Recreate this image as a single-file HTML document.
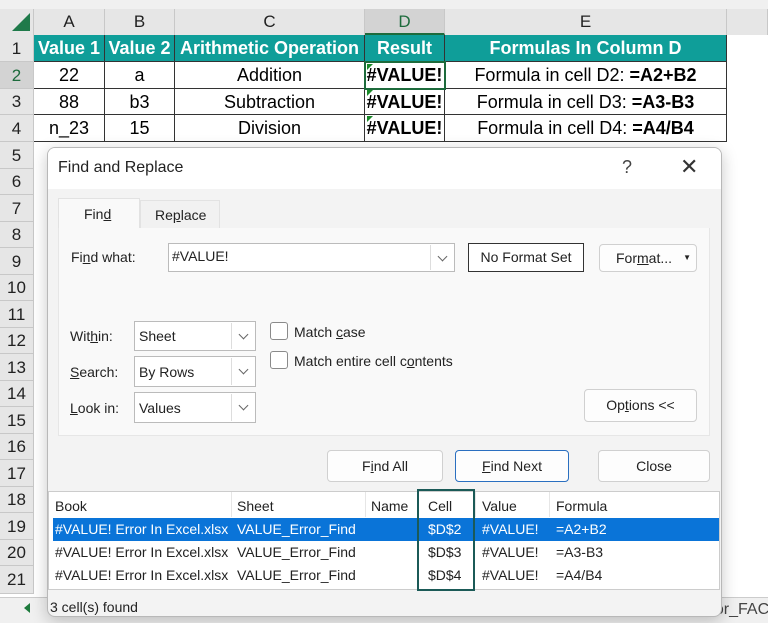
<!DOCTYPE html>
<html><head><meta charset="utf-8"><style>
*{margin:0;padding:0;box-sizing:border-box}
body{width:768px;height:623px;overflow:hidden;background:#fff;font-family:"Liberation Sans",sans-serif;position:relative}
.a{position:absolute}
.rh{position:absolute;left:0;width:34px;background:#e6e6e6;border-bottom:1px solid #c8c8c8;border-right:1px solid #c8c8c8;text-align:center;font-size:17px;color:#222}
.ch{position:absolute;top:9px;height:26px;background:#e6e6e6;border-right:1px solid #c8c8c8;text-align:center;font-size:17px;line-height:26px;color:#222}
.c{position:absolute;text-align:center;font-size:18px;border-right:1px solid #333;border-bottom:1px solid #333;white-space:nowrap;overflow:hidden}
.h{background:#0f9e99;color:#fff;font-weight:bold}
.t{font-size:14px;color:#222;position:absolute;white-space:nowrap}
.btn{position:absolute;background:#fdfdfd;border:1px solid #d0d0d0;border-radius:4px;font-size:14px;text-align:center;color:#222}
.cb{position:absolute;background:#fff;border:1px solid #8a8a8a}
.dd{position:absolute;right:1px;top:1px;bottom:1px;width:23px;border-left:1px solid #ddd;background:#fff}
.dd:after{content:"";position:absolute;left:8px;top:8px;width:6px;height:6px;border-right:1px solid #666;border-bottom:1px solid #666;transform:rotate(45deg)}
u{text-decoration:underline}
</style></head><body>
<div class="a" style="left:0;top:0;width:768px;height:9px;background:#f0f0f0"></div>
<div class="a" style="left:0;top:9px;width:34px;height:26px;background:#e6e6e6;border-right:1px solid #c8c8c8"></div>
<div class="a" style="left:12px;top:13px;width:0;height:0;border-left:18px solid transparent;border-bottom:18px solid #1f7a4a"></div>
<div class="ch" style="left:34px;width:71px">A</div>
<div class="ch" style="left:105px;width:70px">B</div>
<div class="ch" style="left:175px;width:190px">C</div>
<div class="ch" style="left:365px;width:80px;background:#d3d3d3;color:#1d6b3c;border-bottom:2px solid #1d6b3c">D</div>
<div class="ch" style="left:445px;width:282px">E</div>
<div class="ch" style="left:727px;width:41px"></div>
<div class="rh" style="top:35px;height:27px;line-height:27px">1</div>
<div class="rh" style="top:62px;height:27px;line-height:27px;background:#d3d3d3;color:#1d6b3c">2</div>
<div class="rh" style="top:89px;height:26px;line-height:26px">3</div>
<div class="rh" style="top:115px;height:27px;line-height:27px">4</div>
<div class="rh" style="top:142px;height:27px;line-height:27px">5</div>
<div class="rh" style="top:169px;height:26px;line-height:26px">6</div>
<div class="rh" style="top:195px;height:27px;line-height:27px">7</div>
<div class="rh" style="top:222px;height:26px;line-height:26px">8</div>
<div class="rh" style="top:248px;height:27px;line-height:27px">9</div>
<div class="rh" style="top:275px;height:26px;line-height:26px">10</div>
<div class="rh" style="top:301px;height:27px;line-height:27px">11</div>
<div class="rh" style="top:328px;height:26px;line-height:26px">12</div>
<div class="rh" style="top:354px;height:27px;line-height:27px">13</div>
<div class="rh" style="top:381px;height:26px;line-height:26px">14</div>
<div class="rh" style="top:407px;height:27px;line-height:27px">15</div>
<div class="rh" style="top:434px;height:26px;line-height:26px">16</div>
<div class="rh" style="top:460px;height:27px;line-height:27px">17</div>
<div class="rh" style="top:487px;height:26px;line-height:26px">18</div>
<div class="rh" style="top:513px;height:27px;line-height:27px">19</div>
<div class="rh" style="top:540px;height:26px;line-height:26px">20</div>
<div class="rh" style="top:566px;height:28px;line-height:28px">21</div>
<div class="c h" style="left:34px;top:35px;width:71px;height:27px;line-height:27px">Value 1</div>
<div class="c h" style="left:105px;top:35px;width:70px;height:27px;line-height:27px">Value 2</div>
<div class="c h" style="left:175px;top:35px;width:190px;height:27px;line-height:27px">Arithmetic Operation</div>
<div class="c h" style="left:365px;top:35px;width:80px;height:27px;line-height:27px">Result</div>
<div class="c h" style="left:445px;top:35px;width:282px;height:27px;line-height:27px">Formulas In Column D</div>
<div class="c" style="left:34px;top:62px;width:71px;height:27px;line-height:27px">22</div>
<div class="c" style="left:105px;top:62px;width:70px;height:27px;line-height:27px">a</div>
<div class="c" style="left:175px;top:62px;width:190px;height:27px;line-height:27px">Addition</div>
<div class="c" style="left:365px;top:62px;width:80px;height:27px;line-height:27px;font-weight:bold">#VALUE!</div>
<div class="c" style="left:445px;top:62px;width:282px;height:27px;line-height:27px">Formula in cell D2: <b>=A2+B2</b></div>
<div class="c" style="left:34px;top:89px;width:71px;height:26px;line-height:26px">88</div>
<div class="c" style="left:105px;top:89px;width:70px;height:26px;line-height:26px">b3</div>
<div class="c" style="left:175px;top:89px;width:190px;height:26px;line-height:26px">Subtraction</div>
<div class="c" style="left:365px;top:89px;width:80px;height:26px;line-height:26px;font-weight:bold">#VALUE!</div>
<div class="c" style="left:445px;top:89px;width:282px;height:26px;line-height:26px">Formula in cell D3: <b>=A3-B3</b></div>
<div class="c" style="left:34px;top:115px;width:71px;height:27px;line-height:27px">n_23</div>
<div class="c" style="left:105px;top:115px;width:70px;height:27px;line-height:27px">15</div>
<div class="c" style="left:175px;top:115px;width:190px;height:27px;line-height:27px">Division</div>
<div class="c" style="left:365px;top:115px;width:80px;height:27px;line-height:27px;font-weight:bold">#VALUE!</div>
<div class="c" style="left:445px;top:115px;width:282px;height:27px;line-height:27px">Formula in cell D4: <b>=A4/B4</b></div>
<div class="a" style="left:364px;top:61px;width:82px;height:29px;border:2px solid #1d6b3c"></div>
<div class="a" style="left:367px;top:64px;border-right:6px solid transparent;border-top:6px solid #1a8a2a"></div>
<div class="a" style="left:367px;top:90px;border-right:6px solid transparent;border-top:6px solid #1a8a2a"></div>
<div class="a" style="left:367px;top:116px;border-right:6px solid transparent;border-top:6px solid #1a8a2a"></div>
<div class="a" style="left:0;top:597px;width:768px;height:26px;background:#f0f0f0;border-top:1px solid #ccc"></div>
<div class="a" style="left:24px;top:603px;border-right:6px solid #1d7a3c;border-top:5px solid transparent;border-bottom:5px solid transparent"></div>
<div class="t" style="left:706px;top:601px;font-size:16px;color:#444">.:or_FAC</div>
<div class="a" style="left:47px;top:147px;width:675px;height:470px;background:#f3f3f3;border:1px solid #b8b8b8;border-radius:8px;box-shadow:0 4px 16px rgba(0,0,0,.22);overflow:hidden">
 <div class="a" style="left:0;top:0;width:675px;height:41px;background:#fff"></div>
 <div class="t" style="left:10px;top:11px;font-size:16px">Find and Replace</div>
 <div class="t" style="left:574px;top:9px;font-size:18px;color:#444">?</div>
 <div class="t" style="left:632px;top:6px;font-size:22px;color:#333">✕</div>
</div>
<div class="a" style="left:58px;top:198px;width:82px;height:32px;background:#f9f9f9;border:1px solid #e2e2e2;border-bottom:none"></div>
<div class="t" style="left:84px;top:206px">Fin<u>d</u></div>
<div class="a" style="left:140px;top:200px;width:80px;height:28px;border:1px solid #e2e2e2;border-bottom:none;background:#f1f1f1"></div>
<div class="t" style="left:155px;top:207px">Re<u>p</u>lace</div>
<div class="a" style="left:58px;top:228px;width:652px;height:208px;background:#f9f9f9;border:1px solid #e6e6e6;border-top:none"></div>
<div class="t" style="left:71px;top:249px">Fi<u>n</u>d what:</div>
<div class="cb" style="left:168px;top:243px;width:287px;height:29px;border-color:#bbb"><div class="dd"></div></div>
<div class="t" style="left:172px;top:248px">#VALUE!</div>
<div class="btn" style="left:468px;top:243px;width:116px;height:29px;line-height:27px;border:1px solid #333;border-radius:0;background:#fff">No Format Set</div>
<div class="btn" style="left:599px;top:244px;width:98px;height:28px;line-height:26px;padding-right:8px">For<u>m</u>at...<span style="position:absolute;right:5px;top:0;font-size:8px">▼</span></div>
<div class="t" style="left:70px;top:328px">Wit<u>h</u>in:</div>
<div class="t" style="left:70px;top:364px"><u>S</u>earch:</div>
<div class="t" style="left:70px;top:400px"><u>L</u>ook in:</div>
<div class="cb" style="left:134px;top:321px;width:122px;height:30px;border-color:#bbb"><div class="dd"></div></div>
<div class="t" style="left:139px;top:328px">Sheet</div>
<div class="cb" style="left:134px;top:356px;width:122px;height:31px;border-color:#bbb"><div class="dd"></div></div>
<div class="t" style="left:139px;top:364px">By Rows</div>
<div class="cb" style="left:134px;top:392px;width:122px;height:31px;border-color:#bbb"><div class="dd"></div></div>
<div class="t" style="left:139px;top:400px">Values</div>
<div class="cb" style="left:270px;top:322px;width:18px;height:18px;border-radius:3px"></div>
<div class="t" style="left:294px;top:324px">Match <u>c</u>ase</div>
<div class="cb" style="left:270px;top:351px;width:18px;height:18px;border-radius:3px"></div>
<div class="t" style="left:294px;top:353px">Match entire cell c<u>o</u>ntents</div>
<div class="btn" style="left:584px;top:389px;width:113px;height:33px;line-height:31px">Op<u>t</u>ions &lt;&lt;</div>
<div class="btn" style="left:327px;top:450px;width:116px;height:32px;line-height:30px">F<u>i</u>nd All</div>
<div class="btn" style="left:455px;top:450px;width:114px;height:32px;line-height:30px;border:1px solid #2a6fc0"><u>F</u>ind Next</div>
<div class="btn" style="left:598px;top:450px;width:112px;height:32px;line-height:30px">Close</div>
<div class="a" style="left:48px;top:491px;width:672px;height:99px;background:#fff;border:1px solid #ccc"></div>
<div class="a" style="left:231px;top:492px;width:1px;height:25px;background:#e6e6e6"></div>
<div class="a" style="left:365px;top:492px;width:1px;height:25px;background:#e6e6e6"></div>
<div class="a" style="left:475px;top:492px;width:1px;height:25px;background:#e6e6e6"></div>
<div class="a" style="left:549px;top:492px;width:1px;height:25px;background:#e6e6e6"></div>
<div class="t" style="left:55px;top:498px">Book</div>
<div class="t" style="left:237px;top:498px">Sheet</div>
<div class="t" style="left:371px;top:498px">Name</div>
<div class="t" style="left:428px;top:498px">Cell</div>
<div class="t" style="left:482px;top:498px">Value</div>
<div class="t" style="left:556px;top:498px">Formula</div>
<div class="a" style="left:53px;top:518px;width:666px;height:23px;background:#0a74d8"></div>
<div class="t" style="left:55px;top:521px;color:#fff">#VALUE! Error In Excel.xlsx</div>
<div class="t" style="left:237px;top:521px;color:#fff">VALUE_Error_Find</div>
<div class="t" style="left:428px;top:521px;color:#fff">$D$2</div>
<div class="t" style="left:482px;top:521px;color:#fff">#VALUE!</div>
<div class="t" style="left:556px;top:521px;color:#fff">=A2+B2</div>
<div class="t" style="left:55px;top:544px">#VALUE! Error In Excel.xlsx</div>
<div class="t" style="left:237px;top:544px">VALUE_Error_Find</div>
<div class="t" style="left:428px;top:544px">$D$3</div>
<div class="t" style="left:482px;top:544px">#VALUE!</div>
<div class="t" style="left:556px;top:544px">=A3-B3</div>
<div class="t" style="left:55px;top:567px">#VALUE! Error In Excel.xlsx</div>
<div class="t" style="left:237px;top:567px">VALUE_Error_Find</div>
<div class="t" style="left:428px;top:567px">$D$4</div>
<div class="t" style="left:482px;top:567px">#VALUE!</div>
<div class="t" style="left:556px;top:567px">=A4/B4</div>
<div class="a" style="left:417px;top:489px;width:58px;height:102px;border:2px solid #1b5a57"></div>
<div class="t" style="left:50px;top:599px">3 cell(s) found</div>
</body></html>
